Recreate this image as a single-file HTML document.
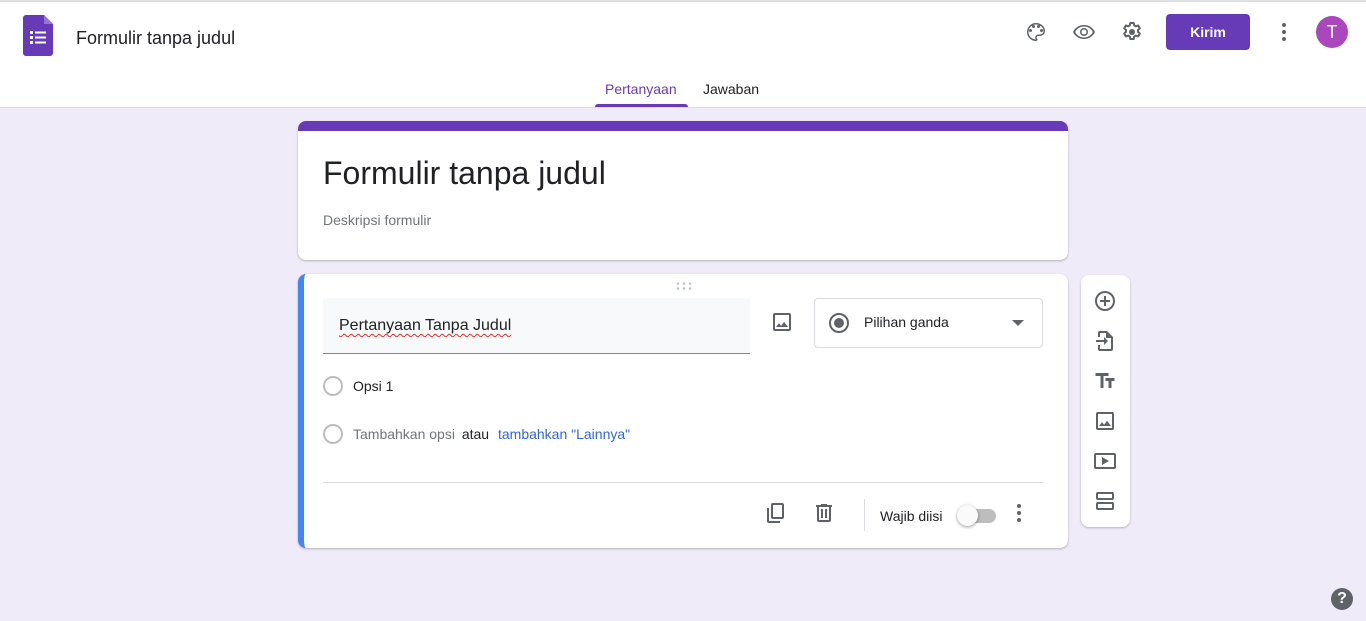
<!DOCTYPE html>
<html><head><meta charset="utf-8"><style>
*{box-sizing:border-box;margin:0;padding:0}
body{width:1366px;height:621px;background:#efebf8;font-family:"Liberation Sans",sans-serif;position:relative;overflow:hidden;color:#202124}
.hdr{position:absolute;left:0;top:0;width:1366px;height:108px;background:#fff;border-top:2px solid #e0e0e0;border-bottom:1px solid #dadce0}
.abs{position:absolute}
.card{position:absolute;background:#fff;border-radius:8px;box-shadow:0 1px 2px rgba(0,0,0,.25)}
svg.i{position:absolute;fill:#5f6368}
</style></head><body>
<div class="hdr"></div>
<svg class="abs" style="left:23px;top:15px" width="30" height="41" viewBox="0 0 30 41"><path d="M3 0h18l9 9v29a3 3 0 0 1-3 3H3a3 3 0 0 1-3-3V3a3 3 0 0 1 3-3z" fill="#673ab7"/><path d="M21 0l9 9h-9z" fill="#9575cd"/><g fill="#fff"><rect x="7" y="16" width="3" height="3"/><rect x="12" y="16.5" width="11" height="2"/><rect x="7" y="21" width="3" height="3"/><rect x="12" y="21.5" width="11" height="2"/><rect x="7" y="26" width="3" height="3"/><rect x="12" y="26.5" width="11" height="2"/></g></svg>
<div class="abs" style="left:76px;top:28px;font-size:18px;color:#202124">Formulir tanpa judul</div>
<svg class="i" style="left:1024px;top:20px" width="24" height="24" viewBox="0 0 24 24"><path d="M12 3a9 9 0 0 0 0 18c.8 0 1.5-.7 1.5-1.5 0-.4-.1-.7-.4-1-.2-.3-.4-.6-.4-1 0-.8.7-1.5 1.5-1.5H16a5 5 0 0 0 5-5c0-4.4-4-8-9-8zm0 16.5a7.5 7.5 0 0 1 0-15c4.1 0 7.5 2.9 7.5 6.5a3.5 3.5 0 0 1-3.5 3.5h-1.8a3 3 0 0 0-2.2 5zM6.5 12a1.5 1.5 0 1 0 0-3 1.5 1.5 0 0 0 0 3zm3-4a1.5 1.5 0 1 0 0-3 1.5 1.5 0 0 0 0 3zm5 0a1.5 1.5 0 1 0 0-3 1.5 1.5 0 0 0 0 3zm3 4a1.5 1.5 0 1 0 0-3 1.5 1.5 0 0 0 0 3z"/></svg>
<svg class="i" style="left:1072px;top:20px" width="24" height="24" viewBox="0 0 24 24"><path d="M12 6.5c3.8 0 7.2 2.1 8.8 5.5-1.6 3.4-5 5.5-8.8 5.5S4.8 15.4 3.2 12C4.8 8.6 8.2 6.5 12 6.5M12 5C7 5 2.7 8.1 1 12c1.7 3.9 6 7 11 7s9.3-3.1 11-7c-1.7-3.9-6-7-11-7zm0 4.5a2.5 2.5 0 1 1 0 5 2.5 2.5 0 0 1 0-5M12 8a4 4 0 1 0 0 8 4 4 0 0 0 0-8z"/></svg>
<svg class="abs" style="left:1120px;top:20px" width="24" height="24" viewBox="0 0 24 24"><g fill="none" stroke="#5f6368" stroke-width="2" stroke-linejoin="round"><path d="M10.3 3h3.4l.5 2.4 1.6.9 2.3-.8 1.7 2.9-1.8 1.6v1.9l1.8 1.6-1.7 2.9-2.3-.8-1.6.9-.5 2.5h-3.4l-.5-2.5-1.6-.9-2.3.8-1.7-2.9 1.8-1.6v-1.9L4.2 8.4l1.7-2.9 2.3.8 1.6-.9z"/></g><circle cx="12" cy="12" r="3" fill="#5f6368"/></svg>
<div class="abs" style="left:1166px;top:14px;width:84px;height:36px;background:#673ab7;border-radius:4px;color:#fff;font-weight:bold;font-size:14px;text-align:center;line-height:36px">Kirim</div>
<svg class="i" style="left:1272px;top:20px" width="24" height="24" viewBox="0 0 24 24"><circle cx="12" cy="5" r="2"/><circle cx="12" cy="12" r="2"/><circle cx="12" cy="19" r="2"/></svg>
<div class="abs" style="left:1316px;top:16px;width:32px;height:32px;border-radius:50%;background:#ab47bc;color:#fff;font-size:18px;text-align:center;line-height:32px">T</div>
<div class="abs" style="left:605px;top:81px;font-size:14px;color:#673ab7">Pertanyaan</div>
<div class="abs" style="left:595px;top:104px;width:93px;height:3px;background:#673ab7;border-radius:3px 3px 0 0"></div>
<div class="abs" style="left:703px;top:81px;font-size:14px;color:#202124">Jawaban</div>

<div class="card" style="left:298px;top:121px;width:770px;height:139px;border-top:10px solid #673ab7"></div>
<div class="abs" style="left:323px;top:155px;font-size:32px;color:#202124">Formulir tanpa judul</div>
<div class="abs" style="left:323px;top:212px;font-size:14px;color:#70757a">Deskripsi formulir</div>

<div class="card" style="left:298px;top:274px;width:770px;height:274px;border-left:6px solid #4285f4"></div>
<svg class="abs" style="left:676px;top:282px" width="16" height="8"><g fill="#bdc1c6"><circle cx="2" cy="1.5" r="1.3"/><circle cx="8" cy="1.5" r="1.3"/><circle cx="14" cy="1.5" r="1.3"/><circle cx="2" cy="6.5" r="1.3"/><circle cx="8" cy="6.5" r="1.3"/><circle cx="14" cy="6.5" r="1.3"/></g></svg>
<div class="abs" style="left:323px;top:298px;width:427px;height:56px;background:#f8f9fa;border-bottom:1px solid #80868b"></div>
<div class="abs" style="left:339px;top:317px;font-size:16px;color:#202124;text-decoration:underline wavy #d93025;text-decoration-thickness:1px;text-underline-offset:3px">Pertanyaan Tanpa Judul</div>
<svg class="i" style="left:770px;top:310px" width="24" height="24" viewBox="0 0 24 24"><path d="M19 5v14H5V5h14m0-2H5a2 2 0 0 0-2 2v14a2 2 0 0 0 2 2h14a2 2 0 0 0 2-2V5a2 2 0 0 0-2-2zm-4.9 8.9l-3 3.8L9 13.1 6 17h12z"/></svg>
<div class="abs" style="left:814px;top:298px;width:229px;height:50px;border:1px solid #dadce0;border-radius:4px"></div>
<svg class="abs" style="left:827px;top:311px" width="24" height="24"><circle cx="12" cy="12" r="9" fill="none" stroke="#5f6368" stroke-width="2"/><circle cx="12" cy="12" r="5" fill="#5f6368"/></svg>
<div class="abs" style="left:864px;top:314px;font-size:14px;color:#202124">Pilihan ganda</div>
<svg class="abs" style="left:1012px;top:320px" width="12" height="6"><path d="M0 0h12L6 6z" fill="#5f6368"/></svg>
<div class="abs" style="left:323px;top:376px;width:20px;height:20px;border:2px solid #bdbdbd;border-radius:50%"></div>
<div class="abs" style="left:353px;top:378px;font-size:14px;color:#202124">Opsi 1</div>
<div class="abs" style="left:323px;top:424px;width:20px;height:20px;border:2px solid #bdbdbd;border-radius:50%"></div>
<div class="abs" style="left:353px;top:426px;font-size:14px;color:#70757a">Tambahkan opsi <span style="color:#202124;margin-left:3px">atau</span> <span style="color:#3367d6;margin-left:5px">tambahkan "Lainnya"</span></div>
<div class="abs" style="left:323px;top:482px;width:720px;height:1px;background:#dadce0"></div>
<svg class="i" style="left:763px;top:501px" width="24" height="24" viewBox="0 0 24 24"><path d="M18 2H9a2 2 0 0 0-2 2v12a2 2 0 0 0 2 2h9a2 2 0 0 0 2-2V4a2 2 0 0 0-2-2zm0 14H9V4h9v12zM3 7v13a2 2 0 0 0 2 2h11v-2H5V7H3z" transform="translate(1 0)"/></svg>
<svg class="i" style="left:812px;top:501px" width="24" height="24" viewBox="0 0 24 24"><path d="M15 4V3H9v1H4v2h1v13a2 2 0 0 0 2 2h10a2 2 0 0 0 2-2V6h1V4h-5zm2 15H7V6h10v13zM9 8h2v9H9zm4 0h2v9h-2z"/></svg>
<div class="abs" style="left:864px;top:499px;width:1px;height:32px;background:#dadce0"></div>
<div class="abs" style="left:880px;top:508px;font-size:14px;color:#202124">Wajib diisi</div>
<div class="abs" style="left:960px;top:509px;width:36px;height:14px;border-radius:7px;background:#bdbdbd"></div>
<div class="abs" style="left:957px;top:505px;width:21px;height:21px;border-radius:50%;background:#fafafa;box-shadow:0 1px 3px rgba(0,0,0,.4)"></div>
<svg class="i" style="left:1007px;top:501px" width="24" height="24" viewBox="0 0 24 24"><circle cx="12" cy="5" r="2"/><circle cx="12" cy="12" r="2"/><circle cx="12" cy="19" r="2"/></svg>

<div class="card" style="left:1081px;top:275px;width:49px;height:252px"></div>
<svg class="i" style="left:1093px;top:289px" width="24" height="24" viewBox="0 0 24 24"><path d="M13 7h-2v4H7v2h4v4h2v-4h4v-2h-4zm-1-5a10 10 0 1 0 0 20 10 10 0 0 0 0-20zm0 18a8 8 0 1 1 0-16 8 8 0 0 1 0 16z"/></svg>
<svg class="i" style="left:1093px;top:329px" width="24" height="24" viewBox="0 0 24 24"><path d="M14 2H7a2 2 0 0 0-2 2v4h2V4h6v5h5v11H7v-4H5v4a2 2 0 0 0 2 2h11a2 2 0 0 0 2-2V8zM11 16l4-4-4-4v3H3v2h8z"/></svg>
<svg class="i" style="left:1093px;top:369px" width="24" height="24" viewBox="0 0 24 24"><path d="M2.5 4v3h5v12h3V7h5V4zm19 5h-9v3h3v7h3v-7h3z"/></svg>
<svg class="i" style="left:1093px;top:409px" width="24" height="24" viewBox="0 0 24 24"><path d="M19 5v14H5V5h14m0-2H5a2 2 0 0 0-2 2v14a2 2 0 0 0 2 2h14a2 2 0 0 0 2-2V5a2 2 0 0 0-2-2zm-4.9 8.9l-3 3.8L9 13.1 6 17h12z"/></svg>
<svg class="i" style="left:1093px;top:449px" width="24" height="24" viewBox="0 0 24 24"><path d="M21 4H3a2 2 0 0 0-2 2v12a2 2 0 0 0 2 2h18a2 2 0 0 0 2-2V6a2 2 0 0 0-2-2zm0 14H3V6h18zM9 8v8l7-4z"/></svg>
<svg class="i" style="left:1093px;top:489px" width="24" height="24" viewBox="0 0 24 24"><path d="M19 13H5a2 2 0 0 0-2 2v4a2 2 0 0 0 2 2h14a2 2 0 0 0 2-2v-4a2 2 0 0 0-2-2zm0 6H5v-4h14zM19 3H5a2 2 0 0 0-2 2v4a2 2 0 0 0 2 2h14a2 2 0 0 0 2-2V5a2 2 0 0 0-2-2zm0 6H5V5h14z"/></svg>

<div class="abs" style="left:1331px;top:588px;width:22px;height:22px;border-radius:50%;background:#5f6368;color:#fff;font-weight:bold;font-size:16px;text-align:center;line-height:22px">?</div>
</body></html>
